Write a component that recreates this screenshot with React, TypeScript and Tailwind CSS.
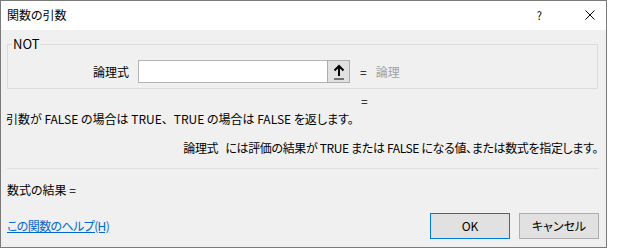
import React from "react";

const font = { fontFamily: '"Noto Sans CJK JP", "Noto Sans", sans-serif' };

function ArrowUpIcon() {
  return (
    <svg width="12" height="16" viewBox="0 0 12 16" fill="none">
      <path d="M6 2 L6 12" stroke="#000" strokeWidth="2" />
      <path d="M1.5 6.5 L6 2 L10.5 6.5" stroke="#000" strokeWidth="2" fill="none" />
      <path d="M1 15 L11 15" stroke="#000" strokeWidth="1" />
    </svg>
  );
}

function CloseIcon() {
  return (
    <svg width="10" height="10" viewBox="0 0 10 10">
      <path d="M0.5 0.5 L9.5 9.5 M9.5 0.5 L0.5 9.5" stroke="#000" strokeWidth="1" />
    </svg>
  );
}

export default function App() {
  return (
    <div className="w-[620px] h-[249px] bg-white [font-feature-settings:'palt']" style={font}>
      <div className="w-[607px] h-[248px] border border-[#7a7a7a] bg-[#f0f0f0] flex flex-col text-[12px] text-black">
        {/* title bar */}
        <div className="h-[29px] bg-white flex items-center pl-[6px] pb-[1px] shrink-0">
          <span className="text-[12px]">関数の引数</span>
          <span className="ml-auto mr-[43px] text-[11px]">?</span>
          <span className="mr-[11px] flex items-center">
            <CloseIcon />
          </span>
        </div>

        {/* group box */}
        <div className="relative mt-[14px] ml-[6px] w-[591px] h-[45px] border border-[#dcdcdc] flex items-start pt-[15px]">
          <span className="absolute -top-[10px] left-[4px] bg-[#f0f0f0] px-[1px] text-[13px] leading-[18px]">
            NOT
          </span>
          <span className="w-[121px] text-right text-[12px] leading-[23px]">論理式</span>
          <div className="ml-[9px] flex h-[23px]">
            <div className="w-[189px] h-full bg-white border border-[#b4b4b4] border-r-0" />
            <div className="w-[23px] h-full bg-[#e1e1e1] border border-[#adadad] flex items-center justify-center">
              <ArrowUpIcon />
            </div>
          </div>
          <span className="ml-[10px] text-[12px] leading-[23px]">=</span>
          <span className="ml-[9px] text-[12px] leading-[23px] text-[#a0a0a0]">論理</span>
        </div>

        <div className="h-[16px] mt-[4px] pl-[360px] leading-[16px]">=</div>

        <div className="mt-[1px] pl-[5px] leading-[18px]">
          引数が FALSE の場合は TRUE
          <span className="[font-feature-settings:normal]">、</span>
          TRUE の場合は FALSE を返します。
        </div>

        <div className="mt-[11px] pr-[8px] text-right leading-[18px] tracking-[-0.35px]">
          論理式&nbsp;&nbsp; には評価の結果が TRUE または FALSE になる値、または数式を指定します。
        </div>

        <div className="mt-[11px] ml-[6px] w-[592px] h-px bg-[#dfdfdf]" />

        <div className="mt-[12px] pl-[6px] leading-[18px]">数式の結果 =</div>

        <div className="mt-[14px] flex items-center pl-[6px] pr-[7px]">
          <a className="text-[#0066cc] underline leading-[18px] tracking-[-0.6px]" href="#">
            この関数のヘルプ(H)
          </a>
          <button className="ml-auto w-[80px] h-[26px] bg-[#e1e1e1] border border-[#0078d7] text-[12px]">
            OK
          </button>
          <button className="ml-[9px] w-[80px] h-[26px] bg-[#e1e1e1] border border-[#adadad] text-[12px]">
            キャンセル
          </button>
        </div>
      </div>
    </div>
  );
}
